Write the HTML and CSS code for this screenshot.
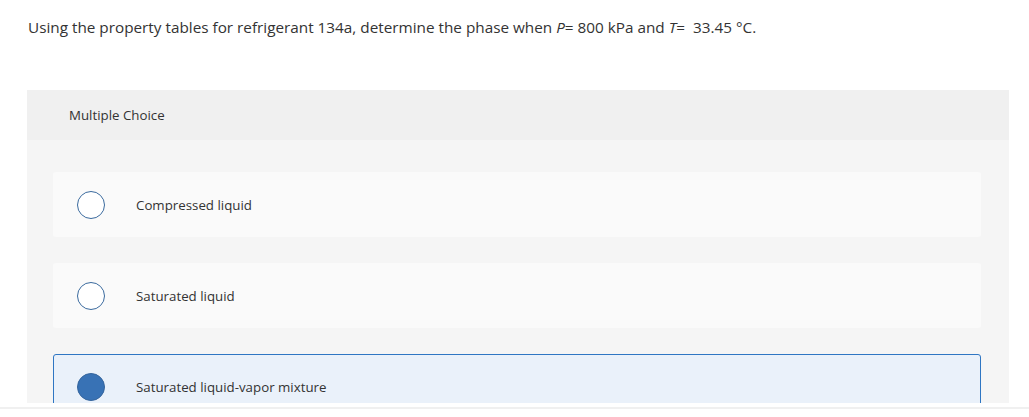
FILE: index.html
```html
<!DOCTYPE html>
<html>
<head>
<meta charset="utf-8">
<link rel="stylesheet" href="styles.css">
</head>
<body>
<div class="page">
  <p class="question">Using the property tables for refrigerant 134a, determine the phase when <i>P</i>= 800 kPa and <i>T</i>= &nbsp;33.45 °C.</p>
  <section class="mc">
    <header class="mc-head">Multiple Choice</header>
    <div class="mc-body">
      <div class="option">
        <span class="radio"></span>
        <span class="label">Compressed liquid</span>
      </div>
      <div class="option">
        <span class="radio"></span>
        <span class="label">Saturated liquid</span>
      </div>
      <div class="option selected">
        <span class="radio"></span>
        <span class="label">Saturated liquid-vapor mixture</span>
      </div>
    </div>
  </section>
</div>
<div class="footer-line"></div>
</body>
</html>
```

FILE: styles.css
```css
html, body {
  margin: 0;
  padding: 0;
  background: #fff;
  overflow: hidden;
}
body {
  font-family: "Open Sans", "Lato", sans-serif;
  color: #2b2b2b;
}
.page {
  height: 403px;
  overflow: hidden;
  padding: 0 20px 0 27px;
}
.question {
  margin: 0;
  padding: 17px 0 0 1px;
  height: 90px;
  box-sizing: border-box;
  font-size: 15.3px;
  line-height: 21px;
  color: #333;
}
.question i {
  font-style: italic;
}
.mc {
  background: #f5f5f5;
}
.mc-head {
  height: 50px;
  background: #f0f0f0;
  display: flex;
  align-items: center;
  padding-left: 42px;
  font-size: 13.3px;
  color: #333;
}
.mc-body {
  padding: 32px 28px 0 26px;
  display: flex;
  flex-direction: column;
  gap: 26px;
}
.option {
  height: 65px;
  background: #fafafa;
  border-radius: 3px;
  display: flex;
  align-items: center;
  padding-left: 24px;
  box-sizing: border-box;
}
.option.selected {
  background: #eaf1fa;
  border: 1px solid #2f76c3;
  padding-left: 23px;
  height: 66px;
}
.radio {
  width: 28px;
  height: 28px;
  box-sizing: border-box;
  border: 1.5px solid #3a6a9e;
  border-radius: 50%;
  background: #fff;
  flex: none;
}
.selected .radio {
  background: #3872b5;
  border-color: #35659d;
}
.label {
  margin-left: 31px;
  font-size: 13.3px;
  color: #333;
}
.footer-line {
  margin-top: 4px;
  height: 2px;
  background: #f0f0f0;
}
```
